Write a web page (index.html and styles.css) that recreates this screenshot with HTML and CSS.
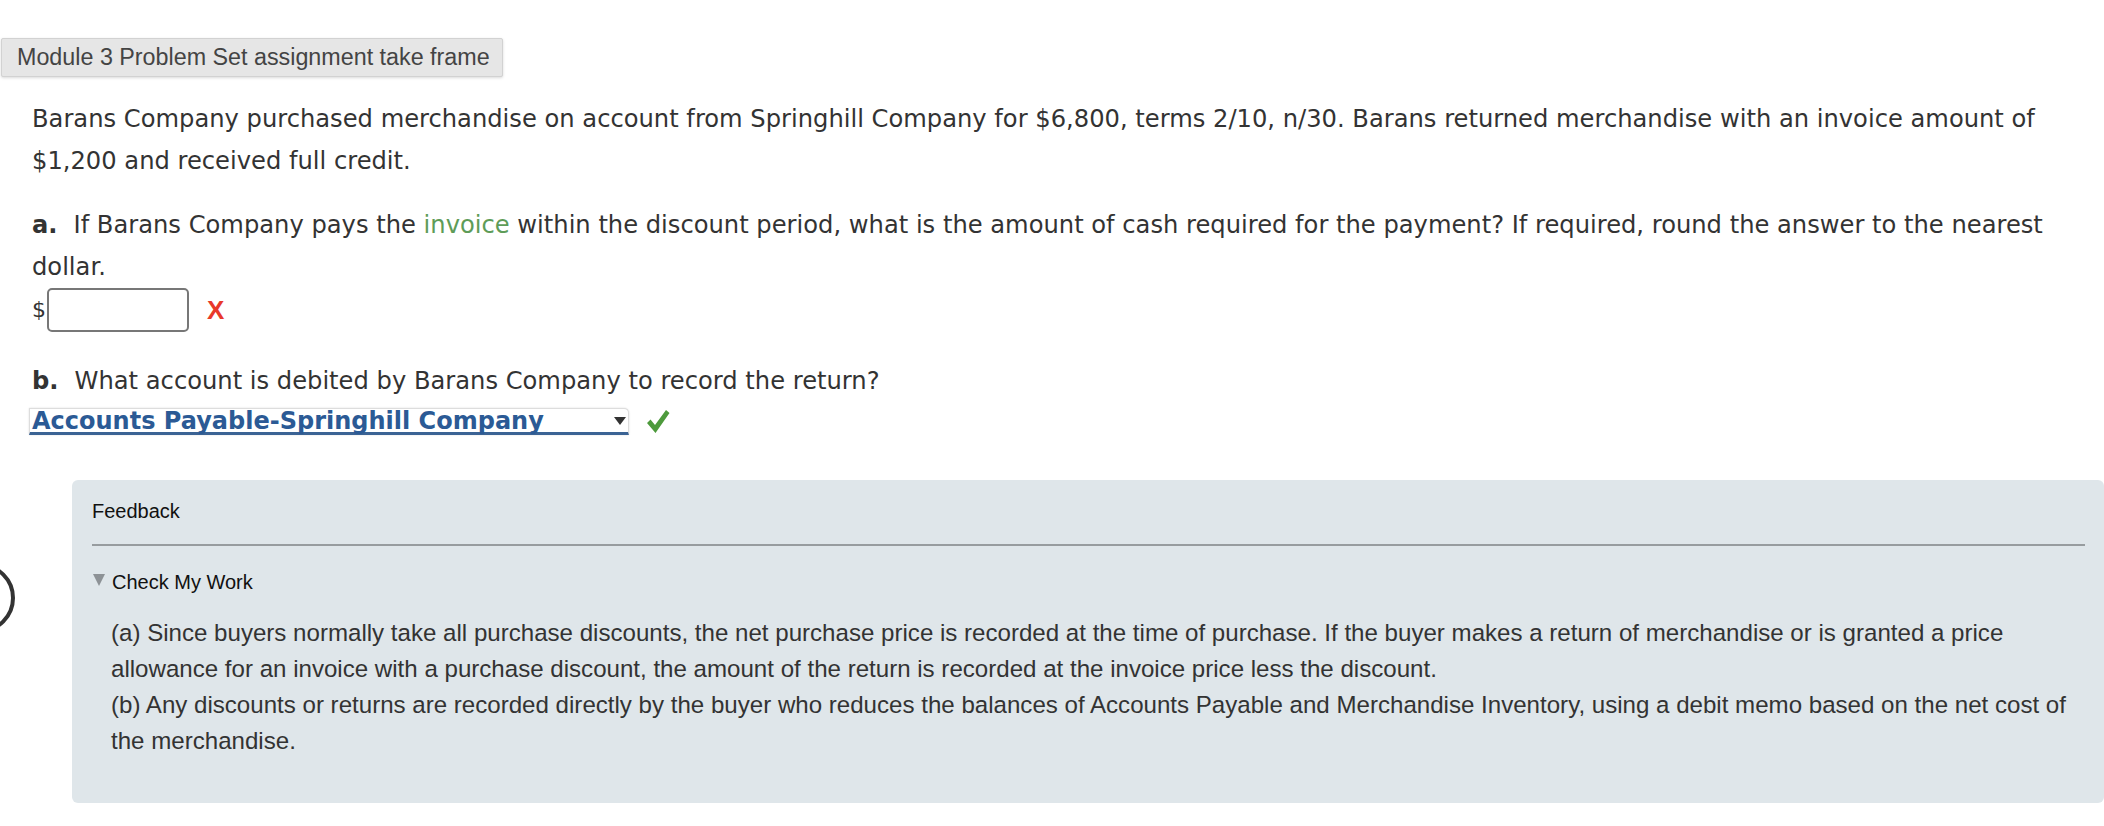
FILE: index.html
```html
<!DOCTYPE html>
<html lang="en">
<head>
    <meta charset="UTF-8">
    <title>Module 3 Problem Set</title>
    <link rel="stylesheet" href="styles.css">
</head>
<body>

<div class="frame-label">Module 3 Problem Set assignment take frame</div>

<div class="question">
    <p class="stem">Barans Company purchased merchandise on account from Springhill Company for $6,800, terms 2/10, n/30. Barans returned merchandise with an invoice amount of $1,200 and received full credit.</p>

    <!-- Part a -->
    <p class="part"><b class="part-label">a.</b>If Barans Company pays the <span class="term">invoice</span> within the discount period, what is the amount of cash required for the payment? If required, round the answer to the nearest<br>dollar.</p>
    <div class="answer-row">
        <span class="dollar">$</span><input type="text" class="answer-input">
        <span class="mark wrong">X</span>
    </div>

    <!-- Part b -->
    <p class="part part-b"><b class="part-label">b.</b>What account is debited by Barans Company to record the return?</p>
    <div class="answer-row">
        <div class="dropdown">
            <span class="dropdown-value">Accounts Payable-Springhill Company</span>
            <span class="dropdown-arrow"></span>
        </div>
        <svg class="mark right" width="24" height="25" viewBox="0 0 24 25">
            <path d="M1 14 L4.5 10.5 L9 16 L20 1 L23.5 4 L9.5 24 Z" fill="#4d9a3c"/>
        </svg>
    </div>
</div>

<div class="ring"></div>

<!-- Feedback -->
<div class="feedback">
    <div class="feedback-title">Feedback</div>
    <div class="check-work"><span class="triangle"></span>Check My Work</div>
    <div class="explanation">
        <p>(a) Since buyers normally take all purchase discounts, the net purchase price is recorded at the time of purchase. If the buyer makes a return of merchandise or is granted a price allowance for an invoice with a purchase discount, the amount of the return is recorded at the invoice price less the discount.</p>
        <p>(b) Any discounts or returns are recorded directly by the buyer who reduces the balances of Accounts Payable and Merchandise Inventory, using a debit memo based on the net cost of the merchandise.</p>
    </div>
</div>

</body>
</html>
```

FILE: styles.css
```css
body {
    margin: 0;
    padding: 38px 0 25px 0;
    background-color: #fff;
    font-family: "DejaVu Sans", Verdana, sans-serif;
    color: #333;
    position: relative;
}

.frame-label {
    margin-left: 1px;
    width: 485px;
    height: 37px;
    padding-left: 15px;
    line-height: 37px;
    background-color: #e6e6e6;
    border: 1px solid #d2d2d2;
    border-radius: 2px;
    box-shadow: 0 1px 3px rgba(0, 0, 0, 0.15);
    font-family: "Liberation Sans", Arial, sans-serif;
    font-size: 23.3px;
    color: #444;
}

.question {
    padding: 0 24px 0 32px;
    font-size: 24.2px;
    line-height: 42px;
}

.question p {
    margin: 0;
}

.stem {
    margin-top: 21px !important;
}

.part {
    margin-top: 22px !important;
}

.part-b {
    margin-top: 28px !important;
}

.part-label {
    margin-right: 16px;
}

.term {
    color: #5e9c58;
}

.answer-row {
    display: flex;
    align-items: center;
}

.dollar {
    font-size: 22px;
    line-height: 44px;
}

.answer-input {
    box-sizing: border-box;
    width: 142px;
    height: 44px;
    margin: 0 0 0 1px;
    border: 2px solid #777;
    border-radius: 5px;
}

.mark {
    margin-left: 18px;
}

.wrong {
    color: #e8392b;
    font-family: "Liberation Sans", Arial, sans-serif;
    font-weight: bold;
    font-size: 26px;
}

.dropdown {
    box-sizing: border-box;
    display: flex;
    align-items: center;
    justify-content: space-between;
    margin: 6px 0 0 -3px;
    width: 600px;
    height: 27px;
    padding: 0 0 0 2px;
    background-color: #fff;
    border: 1px solid #ddd;
    border-bottom: 3px solid #3b6394;
    border-radius: 0 5px 0 0;
    box-shadow: 0 0 2px rgba(0, 0, 0, 0.15);
}

.dropdown-value {
    font-weight: bold;
    font-size: 24px;
    line-height: 24px;
    color: #2b5a95;
}

.dropdown-arrow {
    width: 0;
    height: 0;
    margin-right: 2px;
    border-left: 6px solid transparent;
    border-right: 6px solid transparent;
    border-top: 8px solid #333;
}

.right {
    margin: 6px 0 0 17px;
}

.ring {
    position: absolute;
    left: -55px;
    top: 563px;
    width: 62px;
    height: 62px;
    border: 4px solid #333;
    border-radius: 50%;
}

.feedback {
    margin: 45px 0 0 72px;
    padding: 14px 19px 44px 20px;
    background-color: #dfe6ea;
    border-radius: 6px;
    font-family: "Liberation Sans", Arial, sans-serif;
    color: #111;
}

.feedback-title {
    font-size: 20px;
    line-height: 34px;
    padding-bottom: 16px;
    border-bottom: 2px solid #979c9f;
}

.check-work {
    display: flex;
    align-items: center;
    margin-top: 20px;
    font-size: 20px;
    line-height: 32px;
}

.triangle {
    width: 0;
    height: 0;
    margin: 0 7px 4px 1px;
    border-left: 6px solid transparent;
    border-right: 6px solid transparent;
    border-top: 12px solid #8d9296;
}

.explanation {
    padding-left: 19px;
    margin-top: 17px;
    font-size: 24.1px;
    line-height: 36px;
    color: #333;
}

.explanation p {
    margin: 0;
}
```
